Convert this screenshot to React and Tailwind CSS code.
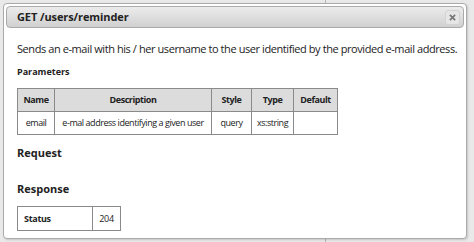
export default function App() {
  const font = { fontFamily: '"Open Sans", "DejaVu Sans", sans-serif' };
  return (
    <div className="relative w-[474px] h-[242px] overflow-hidden bg-[#e9e9e9] pt-[3px] pl-[3px]" style={font}>
      <div className="absolute left-[325px] top-0 bottom-0 w-px bg-[#b5b5b5]" />
      <div className="relative w-[464px] h-[236px] rounded-[4px] border border-[#aaaaaa] bg-white p-[2px] shadow-[1px_1px_2px_rgba(0,0,0,0.15)]">
        <div className="flex h-[22px] items-center justify-between rounded-[4px] border border-[#aaaaaa] bg-gradient-to-b from-[#ececec] to-[#d0d0d0] pl-[10px] pr-[3px]">
          <span className="text-[11px] font-bold tracking-[-0.1px] text-[#222222]">GET /users/reminder</span>
          <div className="flex h-[15px] w-[15px] items-center justify-center rounded-[3px] border border-[#d3d3d3] bg-[#e6e6e6]">
            <svg width="7" height="7" viewBox="0 0 8 8">
              <path d="M1 1 L7 7 M7 1 L1 7" stroke="#777" strokeWidth="2" />
            </svg>
          </div>
        </div>
        <div className="px-[11px] text-[#222222]">
          <p className="mt-[14px] whitespace-nowrap text-[11px] leading-[14px] tracking-[-0.42px]">
            Sends an e-mail with his / her username to the user identified by the provided e-mail address.
          </p>
          <div className="mt-[10px] text-[9px] font-bold leading-[12px]">Parameters</div>
          <table className="mt-[10px] border-collapse text-[9px] leading-[12px] tracking-[-0.45px]">
            <thead>
              <tr className="h-[23px] bg-[#dcdcdc]">
                <th className="w-[37px] border border-[#8a8a8a] font-bold">Name</th>
                <th className="w-[157px] border border-[#8a8a8a] font-bold">Description</th>
                <th className="w-[40px] border border-[#8a8a8a] font-bold">Style</th>
                <th className="w-[42px] border border-[#8a8a8a] font-bold">Type</th>
                <th className="w-[44px] border border-[#8a8a8a] font-bold">Default</th>
              </tr>
            </thead>
            <tbody>
              <tr className="h-[23px]">
                <td className="border border-[#8a8a8a] text-center">email</td>
                <td className="whitespace-nowrap border border-[#8a8a8a] text-center">e-mal address identifying a given user</td>
                <td className="border border-[#8a8a8a] text-center">query</td>
                <td className="border border-[#8a8a8a] text-center">xs:string</td>
                <td className="border border-[#8a8a8a]"></td>
              </tr>
            </tbody>
          </table>
          <div className="mt-[11px] text-[11px] font-bold leading-[14px]">Request</div>
          <div className="mt-[22px] text-[11px] font-bold leading-[14px]">Response</div>
          <table className="mt-[10px] border-collapse text-[9px] leading-[12px]">
            <tbody>
              <tr className="h-[24px]">
                <td className="w-[75px] border border-[#8a8a8a] pl-[6px] font-bold tracking-[-0.3px]">Status</td>
                <td className="w-[28px] border border-[#8a8a8a] text-center tracking-[-0.3px]">204</td>
              </tr>
            </tbody>
          </table>
        </div>
      </div>
    </div>
  );
}
